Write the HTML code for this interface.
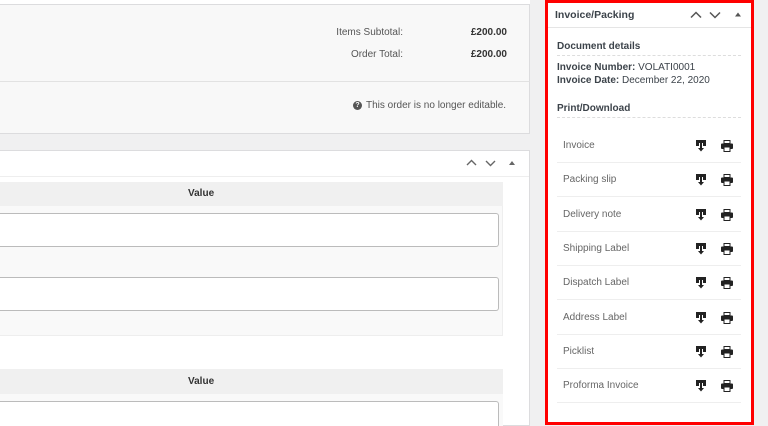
<!DOCTYPE html>
<html><head><style>
*{margin:0;padding:0;box-sizing:border-box}
html,body{width:768px;height:426px;overflow:hidden}
body{background:#f0f0f1;font-family:"Liberation Sans",sans-serif;position:relative;color:#3c434a}
.a{position:absolute}
.t{font-size:10px}
</style></head><body>
<div class="a" style="left:0;top:0;width:530px;height:5px;background:#fff;border-bottom:1px solid #dcdcde"></div>
<div class="a" style="left:0;top:5px;width:530px;height:77px;background:#f8f8f8;border-right:1px solid #dcdcde;border-bottom:1px solid #e2e2e2"></div>
<div class="a t" style="left:300px;top:27px;width:103px;text-align:right;color:#555">Items Subtotal:</div>
<div class="a t" style="left:440px;top:27px;width:67px;text-align:right;font-weight:bold;color:#333">£200.00</div>
<div class="a t" style="left:300px;top:49px;width:103px;text-align:right;color:#555">Order Total:</div>
<div class="a t" style="left:440px;top:49px;width:67px;text-align:right;font-weight:bold;color:#333">£200.00</div>
<div class="a" style="left:0;top:82px;width:530px;height:52px;background:#f8f8f8;border-right:1px solid #dcdcde;border-bottom:1px solid #dcdcde"></div>
<div class="a" style="left:353px;top:101px;width:9px;height:9px;border-radius:50%;background:#555;color:#fff;font-size:7px;font-weight:bold;text-align:center;line-height:9px">?</div>
<div class="a t" style="left:366px;top:100px;color:#555">This order is no longer editable.</div>

<div class="a" style="left:0;top:150px;width:530px;height:276px;background:#fff;border:1px solid #dcdcde;border-left:none"></div>
<div class="a" style="left:0;top:176px;width:529px;height:1px;background:#eee"></div>
<svg class="a" style="left:466px;top:158px" width="50" height="10" viewBox="0 0 50 10"><polyline points="1,7 5.5,2.5 10,7" fill="none" stroke="#666" stroke-width="1.4"/><polyline points="20,3 24.5,7.5 29,3" fill="none" stroke="#666" stroke-width="1.4"/><polygon points="46,3 49,7 43,7" fill="#666"/></svg>

<div class="a" style="left:0;top:182px;width:503px;height:154px;background:#f9f9f9;border-right:1px solid #eee;border-bottom:1px solid #eee"></div>
<div class="a" style="left:0;top:182px;width:503px;height:24px;background:#f0f0f0"></div>
<div class="a t" style="left:188px;top:188px;font-weight:bold;color:#333">Value</div>
<div class="a" style="left:0;top:213px;width:499px;height:34px;background:#fff;border:1px solid #bbb;border-left:none;border-radius:0 3px 3px 0"></div>
<div class="a" style="left:0;top:277px;width:499px;height:34px;background:#fff;border:1px solid #bbb;border-left:none;border-radius:0 3px 3px 0"></div>

<div class="a" style="left:0;top:369px;width:503px;height:57px;background:#f9f9f9"></div>
<div class="a" style="left:0;top:369px;width:503px;height:25px;background:#f0f0f0"></div>
<div class="a t" style="left:188px;top:376px;font-weight:bold;color:#333">Value</div>
<div class="a" style="left:0;top:401px;width:499px;height:30px;background:#fff;border:1px solid #bbb;border-left:none;border-radius:0 3px 0 0"></div>

<div class="a" style="left:545px;top:0;width:209px;height:425px;background:#fff;border:3px solid #f00"></div>
<div class="a" style="left:548px;top:27px;width:203px;height:1px;background:#e5e5e5"></div>
<div class="a" style="left:555px;top:9px;font-size:10.5px;font-weight:bold;color:#3c434a">Invoice/Packing</div>
<svg class="a" style="left:690px;top:10px" width="52" height="10" viewBox="0 0 52 10"><polyline points="1,7.5 6,2.5 11,7.5" fill="none" stroke="#555" stroke-width="1.5"/><polyline points="20,2.5 25,7.5 30,2.5" fill="none" stroke="#555" stroke-width="1.5"/><polygon points="48,2.5 51,6.5 45,6.5" fill="#555"/></svg>
<div class="a" style="left:557px;top:41px;font-size:10px;font-weight:bold;color:#3c434a">Document details</div>
<div class="a" style="left:557px;top:55px;width:184px;border-top:1px dashed #ddd"></div>
<div class="a" style="left:557px;top:62px;font-size:10px;color:#3c434a"><b>Invoice Number:</b> VOLATI0001</div>
<div class="a" style="left:557px;top:75px;font-size:10px;color:#3c434a"><b>Invoice Date:</b> December 22, 2020</div>
<div class="a" style="left:557px;top:103px;font-size:10px;font-weight:bold;color:#3c434a">Print/Download</div>
<div class="a" style="left:557px;top:117px;width:184px;border-top:1px dashed #ddd"></div>
<div id="rows"></div>
<script>
var n=["Invoice","Packing slip","Delivery note","Shipping Label","Dispatch Label","Address Label","Picklist","Proforma Invoice"],h="";
n.forEach(function(s,i){var y=146+i*34.3;
h+='<div class="a" style="left:563px;top:'+(y-6)+'px;font-size:10px;color:#666">'+s+'</div>';
h+='<svg class="a" style="left:695px;top:'+(y-7)+'px" width="12" height="13" viewBox="0 0 12 13"><path d="M1 1h10v6h-3v-3h-4v3h-3z" fill="#222"/><path d="M5 4h2v5h2l-3 3.5-3-3.5h2z" fill="#222"/></svg>';
h+='<svg class="a" style="left:721px;top:'+(y-6)+'px" width="12" height="12" viewBox="0 0 12 12"><rect x="3" y="0.5" width="6" height="3" fill="none" stroke="#222"/><rect x="0" y="3.5" width="12" height="5.5" rx="1" fill="#222"/><rect x="3" y="7" width="6" height="4.5" fill="#fff" stroke="#222"/></svg>';
h+='<div class="a" style="left:557px;top:'+(y+16)+'px;width:184px;height:1px;background:#eee"></div>';});
document.getElementById("rows").innerHTML=h;
</script>
</body></html>
